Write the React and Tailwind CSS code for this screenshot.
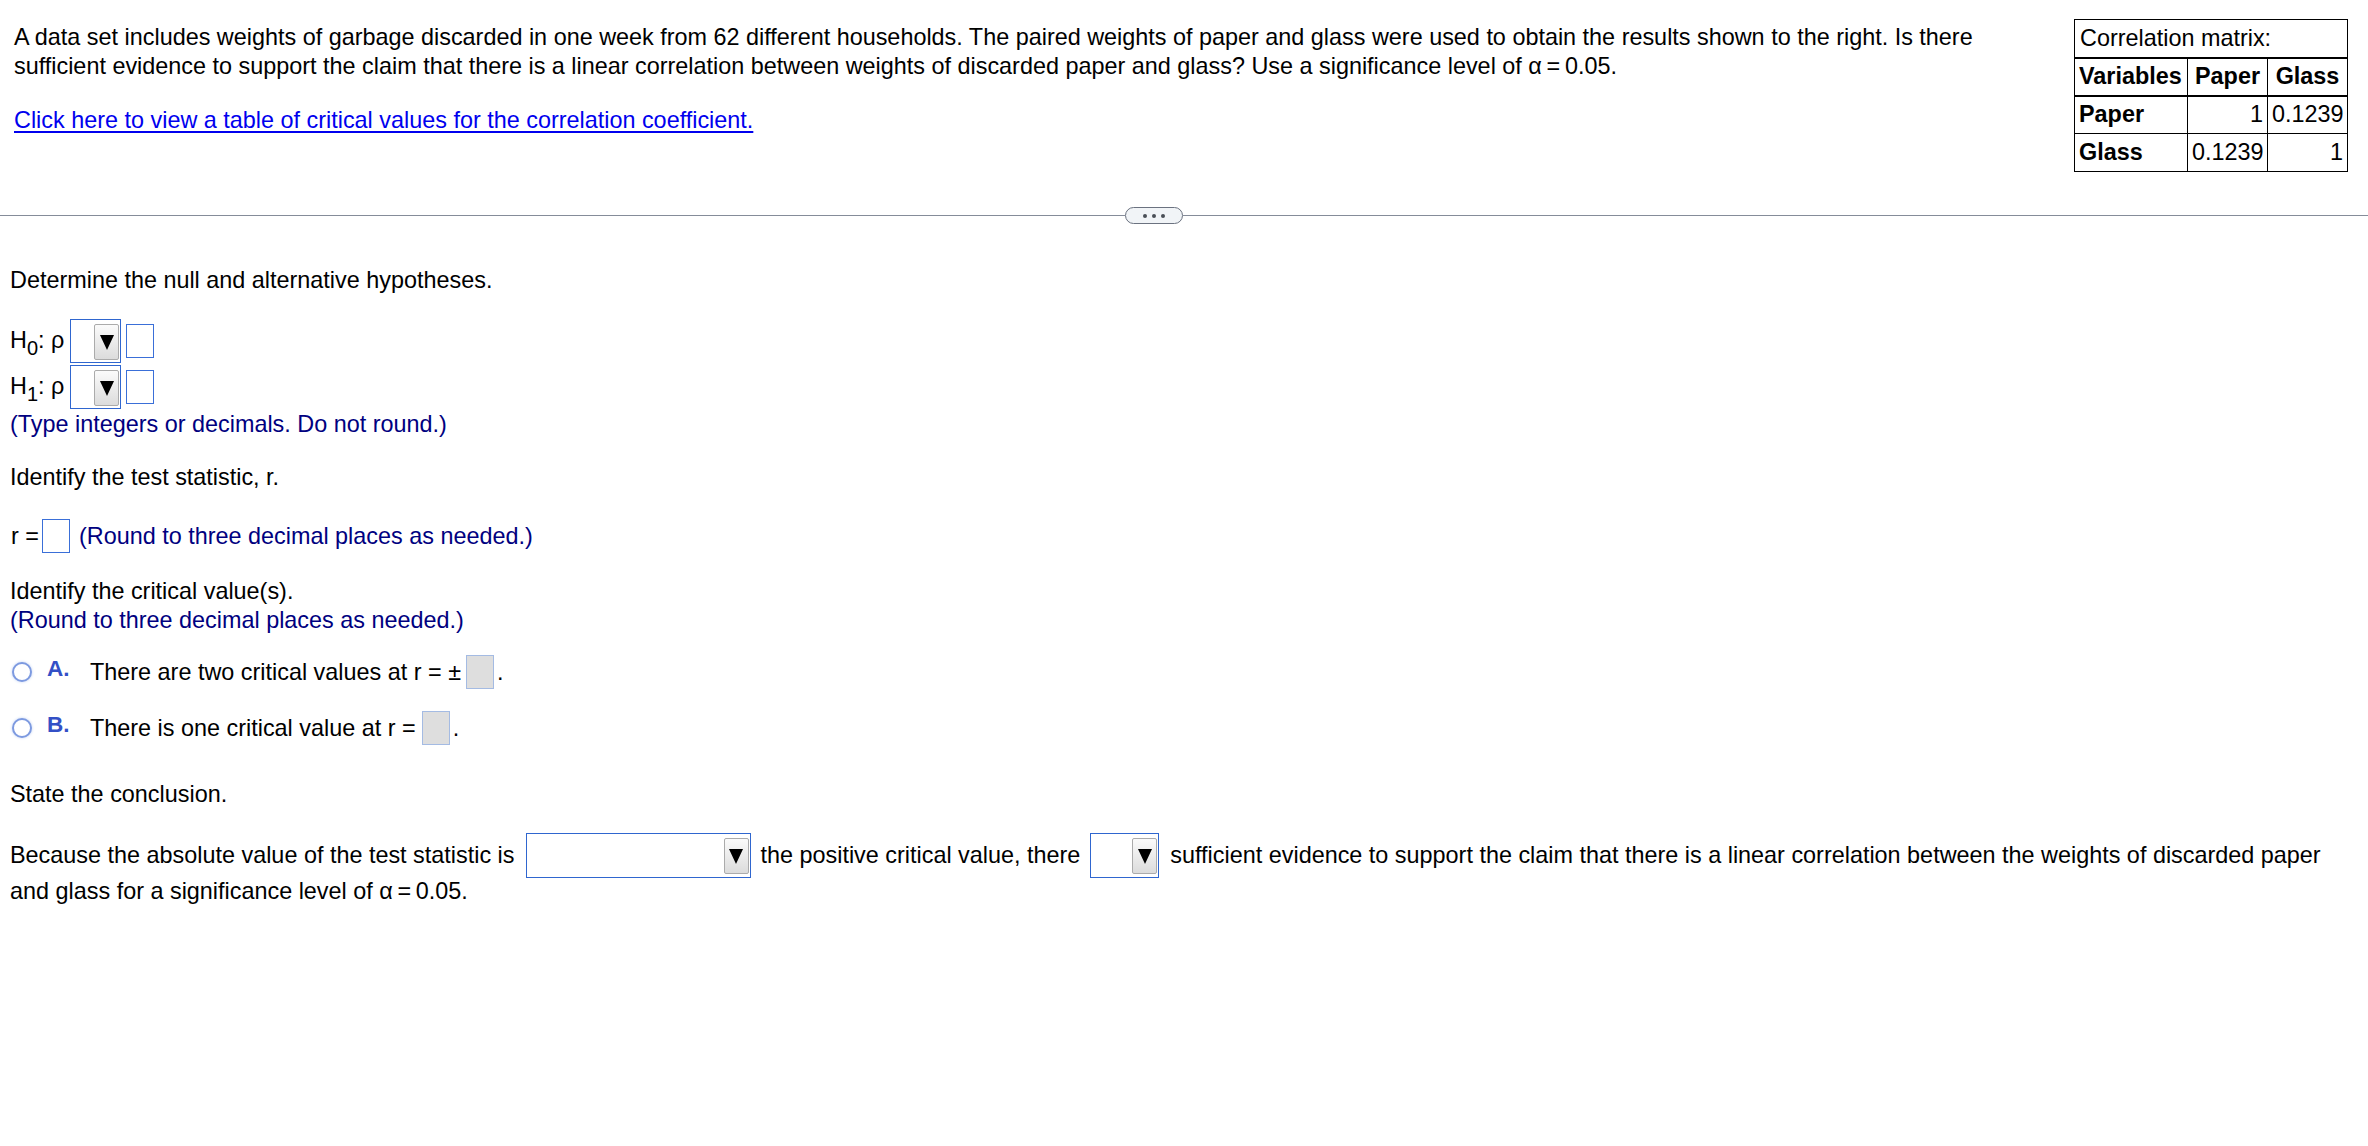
import React from "react";

function Caret() {
  return (
    <svg width="14" height="15" viewBox="0 0 14 15">
      <polygon points="0,0 14,0 7,15" fill="#000" />
    </svg>
  );
}

function Dropdown({ width, height, btnTop, btnBottom }) {
  return (
    <span
      className={`inline-flex justify-end shrink-0 bg-white border border-[#2f66cf] ${width} ${height}`}
    >
      <span
        className={`w-[25px] flex items-center justify-center border border-[#ababab] rounded-[2px] bg-gradient-to-b from-[#fbfbfb] to-[#dcdcdc] mr-px ${btnTop} ${btnBottom}`}
      >
        <Caret />
      </span>
    </span>
  );
}

function InputBox({ className = "" }) {
  return (
    <span
      className={`inline-block shrink-0 w-[28px] h-[34px] border border-[#3a6fd8] bg-white ${className}`}
    />
  );
}

function GrayBox({ className = "" }) {
  return (
    <span
      className={`inline-block shrink-0 w-[28px] h-[34px] border border-[#a4bbe3] bg-[#dedede] ${className}`}
    />
  );
}

function Radio() {
  return (
    <span className="block w-[20px] h-[20px] rounded-full border-2 border-[#7d9ae0] bg-white shadow-[0_0_3px_#c3d2f3]" />
  );
}

function Option({ letter, text, boxGap, className = "" }) {
  return (
    <div className={`flex items-center h-[34px] ${className}`}>
      <span className="ml-[2px] flex">
        <Radio />
      </span>
      <span className="ml-[15px] w-[43px] mb-[7px] text-[22.5px] font-bold text-[#3350c6]">
        {letter}
      </span>
      <span>{text}</span>
      <GrayBox className={boxGap} />
      <span className="ml-[3px]">.</span>
    </div>
  );
}

function HypRow({ sub, className = "" }) {
  return (
    <div className={`flex items-center h-[44px] ${className}`}>
      <span className="w-[60px] whitespace-nowrap">
        H<span className="relative top-[7px] text-[20px]">{sub}</span>: ρ
      </span>
      <Dropdown
        width="w-[51px]"
        height="h-[44px]"
        btnTop="mt-[4px]"
        btnBottom="mb-[2px]"
      />
      <InputBox className="ml-[5px] h-[33px]" />
    </div>
  );
}

export default function App() {
  return (
    <div className="w-[2368px] h-[1146px] bg-white text-black font-['Liberation_Sans',Arial,sans-serif] text-[23.4px] leading-[29px]">
      {/* question header + correlation matrix */}
      <div className="flex h-[207px]">
        <div className="w-[2074px] pl-[14px] pt-[23px]">
          <p>
            A data set includes weights of garbage discarded in one week from 62
            different households. The paired weights of paper and glass were
            used to obtain the results shown to the right. Is there
            <br />
            sufficient evidence to support the claim that there is a linear
            correlation between weights of discarded paper and glass? Use a
            significance level of α{"\u2009"}={"\u2009"}0.05.
          </p>
          <p className="mt-[25px]">
            <a className="text-[#0000ee] underline underline-offset-[3px] cursor-pointer">
              Click here to view a table of critical values for the correlation
              coefficient.
            </a>
          </p>
        </div>
        <div className="pt-[19px]">
          <table className="table-fixed w-[273px] border-collapse border border-black">
            <colgroup>
              <col className="w-[113px]" />
              <col className="w-[80px]" />
              <col className="w-[80px]" />
            </colgroup>
            <tbody>
              <tr className="h-[38px]">
                <td colSpan={3} className="border-b-2 border-black px-[5px]">
                  Correlation matrix:
                </td>
              </tr>
              <tr className="h-[38px] font-bold">
                <td className="border border-black px-[4px] border-b-2">Variables</td>
                <td className="border border-black text-center border-b-2">Paper</td>
                <td className="border border-black text-center border-b-2">Glass</td>
              </tr>
              <tr className="h-[38px]">
                <td className="border border-black px-[4px] font-bold">Paper</td>
                <td className="border border-black text-right px-[4px]">1</td>
                <td className="border border-black text-right px-[4px]">0.1239</td>
              </tr>
              <tr className="h-[38px]">
                <td className="border border-black px-[4px] font-bold">Glass</td>
                <td className="border border-black text-right px-[4px]">0.1239</td>
                <td className="border border-black text-right px-[4px]">1</td>
              </tr>
            </tbody>
          </table>
        </div>
      </div>

      {/* divider with pill */}
      <div className="flex items-center h-[17px]">
        <div className="w-[1125px] h-px bg-[#858c99]" />
        <div className="w-[58px] h-[17px] rounded-full border border-[#6b7280] bg-[#f1f4f7] flex items-center justify-center gap-[5px]">
          <span className="w-[4px] h-[4px] rounded-full bg-[#4a4f57]" />
          <span className="w-[4px] h-[4px] rounded-full bg-[#4a4f57]" />
          <span className="w-[4px] h-[4px] rounded-full bg-[#4a4f57]" />
        </div>
        <div className="flex-1 h-px bg-[#858c99]" />
      </div>

      {/* answer area */}
      <div className="pl-[10px]">
        <p className="mt-[42px]">Determine the null and alternative hypotheses.</p>

        <HypRow sub="0" className="mt-[24px]" />
        <HypRow sub="1" className="mt-[2px]" />
        <p className="mt-[1px] text-[#000080]">
          (Type integers or decimals. Do not round.)
        </p>

        <p className="mt-[24px]">Identify the test statistic, r.</p>

        <div className="flex items-center h-[34px] mt-[27px]">
          <span className="ml-[1px]">r =</span>
          <InputBox className="ml-[3px]" />
          <span className="ml-[9px] text-[#000080]">
            (Round to three decimal places as needed.)
          </span>
        </div>

        <p className="mt-[24px]">Identify the critical value(s).</p>
        <p className="text-[#000080]">(Round to three decimal places as needed.)</p>

        <Option
          letter="A."
          text="There are two critical values at r = ±"
          boxGap="ml-[5px]"
          className="mt-[20px]"
        />
        <Option
          letter="B."
          text="There is one critical value at r ="
          boxGap="ml-[6px]"
          className="mt-[22px]"
        />

        <p className="mt-[35px]">State the conclusion.</p>

        <div className="flex items-center h-[45px] mt-[24px] whitespace-nowrap">
          <span>Because the absolute value of the test statistic is</span>
          <span className="ml-[11px] flex">
            <Dropdown
              width="w-[225px]"
              height="h-[45px]"
              btnTop="mt-[4px]"
              btnBottom="mb-[3px]"
            />
          </span>
          <span className="ml-[10px]">the positive critical value, there</span>
          <span className="ml-[10px] flex">
            <Dropdown
              width="w-[69px]"
              height="h-[45px]"
              btnTop="mt-[4px]"
              btnBottom="mb-[3px]"
            />
          </span>
          <span className="ml-[11px]">
            sufficient evidence to support the claim that there is a linear
            correlation between the weights of discarded paper
          </span>
        </div>
        <p className="-mt-[1px]">
          and glass for a significance level of α{"\u2009"}={"\u2009"}0.05.
        </p>
      </div>
    </div>
  );
}
